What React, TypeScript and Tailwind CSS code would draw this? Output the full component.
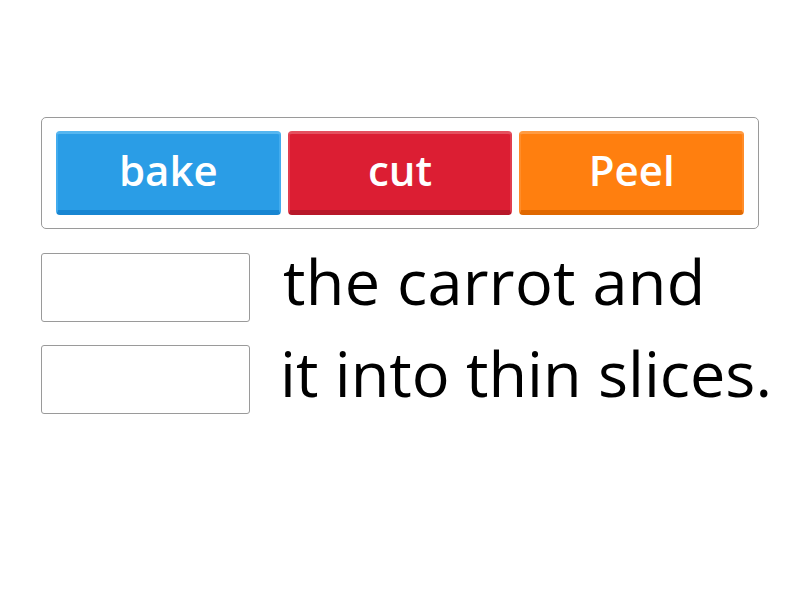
import React from 'react';

const tiles = [
  { label: 'bake', cls: 'bg-[#2a9de6] border-t-[#55b6f0] border-x-[#43acee] border-b-[#1886d2]' },
  { label: 'cut', cls: 'bg-[#dc1e33] border-t-[#e4505f] border-x-[#e13e4f] border-b-[#b8182a]' },
  { label: 'Peel', cls: 'bg-[#ff7f0f] border-t-[#ff9b42] border-x-[#ff8d2a] border-b-[#e06800]' },
];

const rows = [
  { text: 'the carrot and', pad: 'ml-[33px] tracking-[0.3px]' },
  { text: 'it into thin slices.', pad: 'ml-[30px]' },
];

export default function App() {
  return (
    <div className="w-[800px] h-[600px] bg-white pt-[117px] px-[41px]" style={{ fontFamily: '"Open Sans", sans-serif' }}>
      {/* word bank */}
      <div className="border border-[#9a9a9a] rounded-[5px] h-[112px] px-[14px] pt-[13px] flex gap-[7px]">
        {tiles.map((t) => (
          <div
            key={t.label}
            className={`w-[225px] h-[84px] rounded-[4px] border-t-[3px] border-x-[2px] border-b-[5px] flex items-center justify-center pb-[6px] text-white text-[42px] font-semibold ${t.cls}`}
          >
            {t.label}
          </div>
        ))}
      </div>

      <div className="mt-[24px] flex flex-col gap-[23px]">
        {rows.map((r, i) => (
          <div key={i} className="flex items-start h-[69px]">
            <div className="w-[209px] h-[69px] border border-[#9a9a9a] rounded-[3px] bg-white shrink-0" />
            <span className={`${r.pad} text-[63px] leading-[56px] text-black whitespace-nowrap`}>{r.text}</span>
          </div>
        ))}
      </div>
    </div>
  );
}
